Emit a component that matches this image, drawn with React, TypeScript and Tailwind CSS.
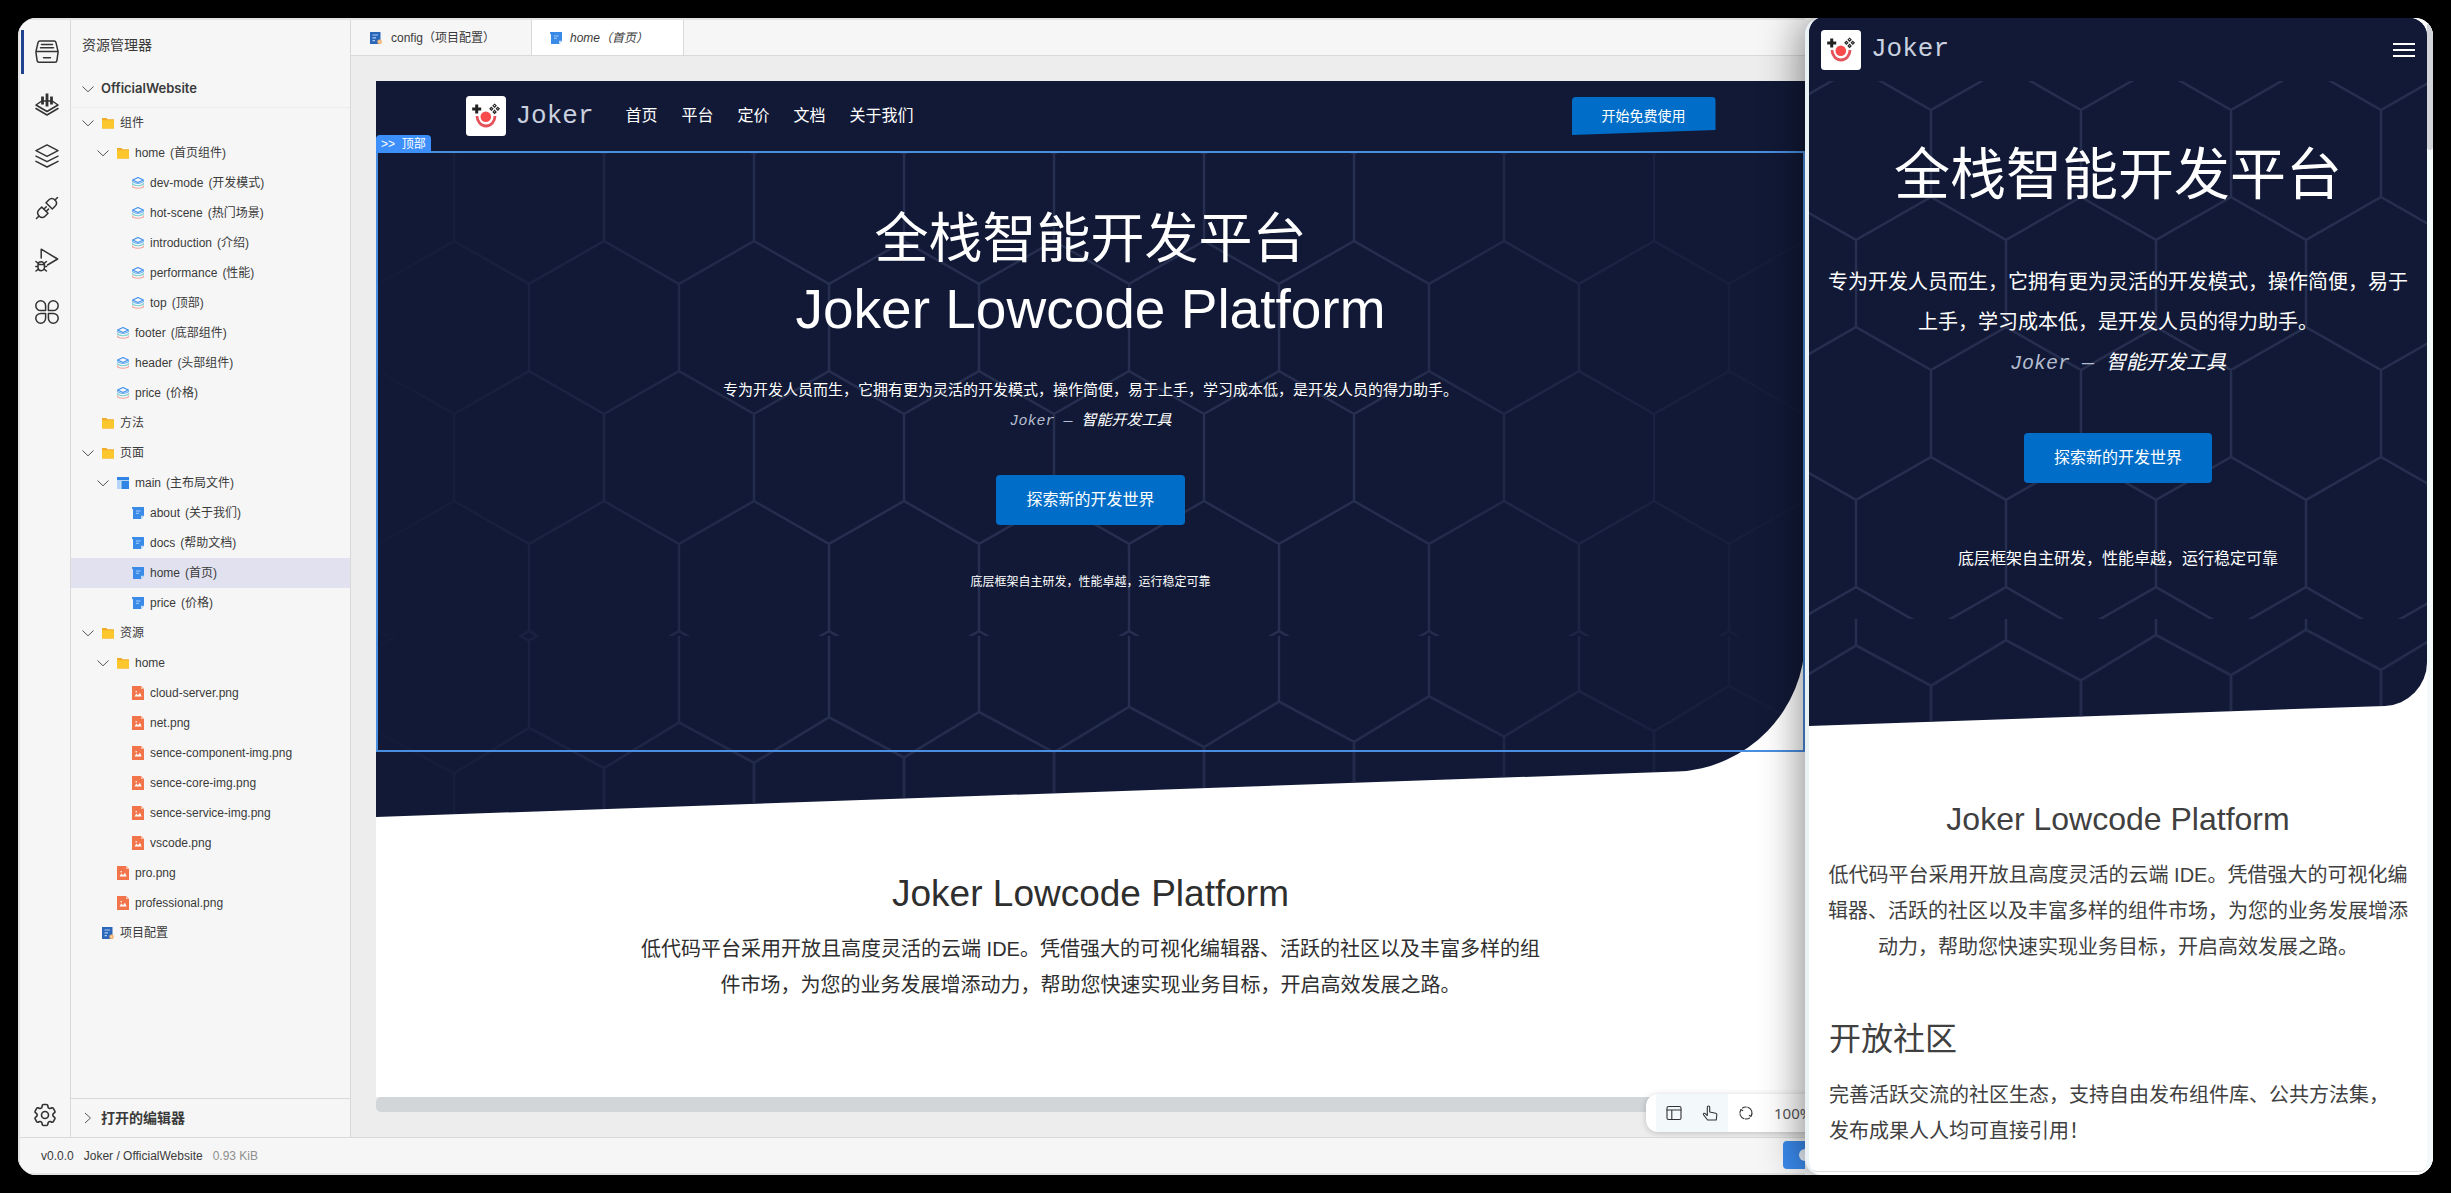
import React from "react";
import { HiOutlineCog6Tooth } from "react-icons/hi2";

/* ---------- drawings ---------- */

const line = { fill: "none", stroke: "currentColor", strokeLinecap: "round", strokeLinejoin: "round" } as const;

function Logo() {
  return (
    <svg viewBox="0 0 40 40" className="size-10 shrink-0" aria-hidden="true">
      <rect width="40" height="40" rx="3.5" fill="#fff" />
      <path d="M10.7 8.4v9M6.2 12.9h9" stroke="#222" strokeWidth="3" fill="none" />
      <g fill="none" stroke="#222" strokeWidth="1.1">
        <path d="m28.6 8.2 1.500 1.500-1.500 1.500-1.500-1.500zM28.6 14.4l1.500 1.500-1.500 1.500-1.500-1.500zM25.4 11.3l1.500 1.500-1.500 1.500-1.500-1.500zM31.8 11.3l1.500 1.500-1.500 1.500-1.500-1.500z" />
      </g>
      <path d="M11 20a9 10 0 0 0 18 0" fill="none" stroke="#e5535a" strokeWidth="2.800" />
      <circle cx="19.800" cy="20.600" r="6.300" fill="#fff" />
      <circle cx="19.800" cy="20.800" r="5.300" fill="#f94b4b" />
    </svg>
  );
}

function DrawerIcon() {
  return (
    <svg viewBox="0 0 24 24" className="size-6" {...line} strokeWidth="1.5">
      <path d="M.9 11.4h22.2M1 11.4l2-8.8Q3.4 1 5 1h14q1.6 0 2 1.6l2 8.8v1.2l-1.1 8Q21.7 22.3 20 22.3H4q-1.7 0-1.9-1.7L1 12.6z" />
      <path d="M6.5 4.500h11M5.500 7.800h13M8.500 17.800h7" />
    </svg>
  );
}

function ChartStackIcon() {
  return (
    <svg viewBox="0 0 24 24" className="size-6" {...line} strokeWidth="1.5">
      <path d="M6 9.5 1 13l11 6.500L23 13l-5-3.500M1 16.500 12 23l11-6.500" />
      <path d="M7.5 4.500v8M12 1.500v13M16.500 4.500v8" strokeWidth="2.800" strokeLinecap="butt" />
      <path d="M7 9h10" />
    </svg>
  );
}

function LayersIcon() {
  return (
    <svg viewBox="0 0 24 24" className="size-6" {...line} strokeWidth="1.5">
      <path d="M12 .9 23 6.600l-11 5.700L1 6.600zM1 12.200l11 5.500 11-5.500M1 17.400l11 5.600 11-5.600" />
    </svg>
  );
}

function PlugIcon() {
  return (
    <svg viewBox="0 0 24 24" className="size-6" {...line} strokeWidth="1.5">
      <path d="M1.5 22.500 4 20M20 4l2.500-2.500" />
      <path d="M4 20c-2-2-1.800-4.500 0-6.300l2.700-2.700 6.300 6.300-2.700 2.700c-1.800 1.800-4.300 2-6.300 0zM20 4c2 2 1.800 4.500 0 6.300L17.300 13 11 6.700 13.700 4c1.800-1.800 4.300-2 6.300 0z" />
      <path d="m9 13 2.300-2.300M11.300 15.300l2.200-2.200" />
    </svg>
  );
}

function DebugIcon() {
  return (
    <svg viewBox="0 0 24 24" className="size-6" {...line} strokeWidth="1.5">
      <path d="M6.2 10V1.200L22.600 11 12.500 17" />
      <path d="M3 17a3.200 3.200 0 0 1 6.400 0v2.500a3.200 3.200 0 0 1-6.400 0zM3 16.500h6.400M1 13.500l2 1.800M11.400 13.500l-2 1.800M.8 18.500H3M9.400 18.500h2.200M1 23l2.200-1.800M11.400 23l-2.200-1.800" />
    </svg>
  );
}

function PetalsIcon() {
  return (
    <svg viewBox="0 0 24 24" className="size-6" {...line} strokeWidth="1.5">
      <path d="M10.6 10.600H5.800A4.900 4.900 0 1 1 10.600 5.800zM13.400 10.600h4.800A4.900 4.900 0 1 0 13.400 5.800zM10.600 13.400H5.800a4.900 4.900 0 1 0 4.800 4.800zM13.400 13.400h4.800a4.900 4.900 0 1 1-4.800 4.800z" />
    </svg>
  );
}

type Kind = "folder" | "comp" | "page" | "layout" | "img" | "config";

function FileIcon({ kind }: { kind: Kind }) {
  const cls = "w-3 h-3.5 shrink-0";
  switch (kind) {
    case "folder":
      return (
        <svg viewBox="0 0 12 14" className={cls}>
          <path d="M0 2h4.5l1 1.200H12V12.400H0z" fill="#f0ac28" />
          <path d="M0 4.200h12V12.400H0z" fill="#fcc62d" />
        </svg>
      );
    case "comp":
      return (
        <svg viewBox="0 0 12 14" className={cls} fill="none" strokeWidth="1.1" strokeLinejoin="round">
          <path d="M.6 9.600v1.300q5.400 2.800 10.800 0V9.600" stroke="#f2a39d" />
          <path d="M.6 6.900v1.400q5.400 3 10.800 0V6.900" stroke="#7fd3cf" />
          <path d="M6 1.600 11.400 4 6 6.600.6 4z" stroke="#3f8fee" />
          <path d="M.6 4v1.800Q6 9 11.400 5.800V4" stroke="#6db1f2" />
        </svg>
      );
    case "page":
      return (
        <svg viewBox="0 0 12 14" className={cls}>
          <path d="M0 1h12v8.800L9 13H1V3.500L0 2.500z" fill="#3a8ae8" />
          <path d="M12 9.800 9 13V9.800z" fill="#c4defa" />
          <path d="M4 5h4.500M4 7.300h3" stroke="#b4d5fa" strokeWidth=".9" />
        </svg>
      );
    case "layout":
      return (
        <svg viewBox="0 0 12 14" className={cls}>
          <path d="M0 1h12v3.300H0z" fill="#2f84e4" />
          <path d="M0 4.300h3.700V13H0z" fill="#b5d5f8" />
          <path d="M4.400 5H12V13H4.400z" fill="#2f84e4" />
        </svg>
      );
    case "img":
      return (
        <svg viewBox="0 0 12 14" className={cls}>
          <path d="M0 0h9l3 3v11H0z" fill="#f2744a" />
          <path d="M9 0v3h3z" fill="#f9bda8" />
          <path d="m2.5 10.500 1.800-3 1.700 1.700 2-2.400 1.600 3.700z" fill="#fff" />
          <circle cx="4.2" cy="5.800" r=".8" fill="#fff" />
        </svg>
      );
    case "config":
      return (
        <svg viewBox="0 0 12 14" className={cls}>
          <path d="M0 1h10.5v12H0z" fill="#2c66b8" />
          <path d="M2.5 4h5.500M2.500 6.800h3.500M2.500 9.600h2.500" stroke="#a8ccf5" strokeWidth="1.2" />
          <circle cx="9.6" cy="10.800" r="2.400" fill="#f5b573" />
          <circle cx="9.6" cy="10.800" r=".8" fill="#fbe3c6" />
        </svg>
      );
  }
}

function Chevron({ right = false }: { right?: boolean }) {
  return (
    <svg viewBox="0 0 12 12" className="size-3 shrink-0" fill="none" stroke="#555" strokeWidth="1">
      <path d={right ? "M3 1l5.500 5L3 11" : "M.5 3.500 6 8.800l5.500-5.300"} />
    </svg>
  );
}

/* Honeycomb lattice that tiles across whatever box it is placed in. */
function Honeycomb({ id, x, y, fade = false }: { id: string; x: number; y: number; fade?: boolean }) {
  return (
    <svg className="absolute inset-0 size-full" aria-hidden="true">
      <defs>
        <pattern id={id} width="150" height="260" patternUnits="userSpaceOnUse" patternTransform={`translate(${x} ${y})`}>
          <path
            d="M75 0v87M75 87 0 130M75 87l75 43M0 130v87M150 130v87M0 217l75 43M150 217l-75 43"
            fill="none"
            stroke="#262f4f"
            strokeWidth="2.4"
          />
        </pattern>
        <linearGradient id={`${id}-g`}>
          <stop offset="0" stopColor="#fff" stopOpacity=".1" />
          <stop offset=".3" stopColor="#fff" />
          <stop offset=".7" stopColor="#fff" />
          <stop offset="1" stopColor="#fff" stopOpacity=".1" />
        </linearGradient>
        <mask id={`${id}-m`}>
          <rect width="100%" height="100%" fill={`url(#${id}-g)`} />
        </mask>
      </defs>
      <rect width="100%" height="100%" fill={`url(#${id})`} mask={fade ? `url(#${id}-m)` : undefined} />
    </svg>
  );
}

/* ---------- explorer ---------- */

type Row = { level: number; kind: Kind; name: string; note?: string; open?: boolean; active?: boolean };

const rows: Row[] = [
  { level: 0, kind: "folder", name: "组件", open: true },
  { level: 1, kind: "folder", name: "home", note: "(首页组件)", open: true },
  { level: 2, kind: "comp", name: "dev-mode", note: "(开发模式)" },
  { level: 2, kind: "comp", name: "hot-scene", note: "(热门场景)" },
  { level: 2, kind: "comp", name: "introduction", note: "(介绍)" },
  { level: 2, kind: "comp", name: "performance", note: "(性能)" },
  { level: 2, kind: "comp", name: "top", note: "(顶部)" },
  { level: 1, kind: "comp", name: "footer", note: "(底部组件)" },
  { level: 1, kind: "comp", name: "header", note: "(头部组件)" },
  { level: 1, kind: "comp", name: "price", note: "(价格)" },
  { level: 0, kind: "folder", name: "方法" },
  { level: 0, kind: "folder", name: "页面", open: true },
  { level: 1, kind: "layout", name: "main", note: "(主布局文件)", open: true },
  { level: 2, kind: "page", name: "about", note: "(关于我们)" },
  { level: 2, kind: "page", name: "docs", note: "(帮助文档)" },
  { level: 2, kind: "page", name: "home", note: "(首页)", active: true },
  { level: 2, kind: "page", name: "price", note: "(价格)" },
  { level: 0, kind: "folder", name: "资源", open: true },
  { level: 1, kind: "folder", name: "home", open: true },
  { level: 2, kind: "img", name: "cloud-server.png" },
  { level: 2, kind: "img", name: "net.png" },
  { level: 2, kind: "img", name: "sence-component-img.png" },
  { level: 2, kind: "img", name: "sence-core-img.png" },
  { level: 2, kind: "img", name: "sence-service-img.png" },
  { level: 2, kind: "img", name: "vscode.png" },
  { level: 1, kind: "img", name: "pro.png" },
  { level: 1, kind: "img", name: "professional.png" },
  { level: 0, kind: "config", name: "项目配置" },
];

const indent = ["pl-[11px]", "pl-[26px]", "pl-[41px]"];

function TreeRow({ row }: { row: Row }) {
  return (
    <li>
      <button
        type="button"
        className={`flex h-[30px] w-full items-center text-left text-xs text-[#3a3a3a] ${indent[row.level]} ${row.active ? "bg-[#e1e1ef]" : ""}`}
      >
        {row.open ? <Chevron /> : <span className="w-3 shrink-0" />}
        <span className="ml-2 flex">
          <FileIcon kind={row.kind} />
        </span>
        <span className="ml-1.5">{row.name}</span>
        {row.note && <span className="ml-[5px]">{row.note}</span>}
      </button>
    </li>
  );
}

function Rail() {
  const items: [string, React.ReactNode][] = [
    ["资源管理器", <DrawerIcon />],
    ["数据模型", <ChartStackIcon />],
    ["图层", <LayersIcon />],
    ["连接", <PlugIcon />],
    ["运行和调试", <DebugIcon />],
    ["扩展", <PetalsIcon />],
  ];
  return (
    <nav className="flex w-[51px] shrink-0 flex-col border-r border-[#d9d9d9] pt-1.5 text-[#333]">
      {items.map(([label, icon], i) => (
        <button
          key={label}
          type="button"
          aria-label={label}
          className="relative flex h-[52px] w-full items-center justify-center pl-1"
        >
          {i === 0 && <span className="absolute top-1 left-px h-11 w-[3px] bg-[#1f4390]" />}
          {icon}
        </button>
      ))}
      <button type="button" aria-label="设置" className="mt-auto mb-2 flex h-7 items-center justify-center">
        <HiOutlineCog6Tooth className="size-7" strokeWidth={1.4} />
      </button>
    </nav>
  );
}

function Explorer() {
  return (
    <aside className="flex w-[280px] shrink-0 flex-col border-r border-[#d9d9d9] text-[#3a3a3a]">
      <h2 className="pt-[15px] pl-[11px] text-sm/5">资源管理器</h2>
      <button
        type="button"
        className="mt-4 flex h-[37px] w-full items-center gap-[7px] border-b border-[#ececec] pl-[11px] text-left text-[13px] font-semibold"
      >
        <Chevron />
        <span className="font-['Inter']">OfficialWebsite</span>
      </button>
      <ul>
        {rows.map((r, i) => (
          <TreeRow key={i} row={r} />
        ))}
      </ul>
      <button
        type="button"
        className="mt-auto flex h-[39px] w-full items-center gap-[7px] border-t border-[#d9d9d9] pl-[11px] text-left text-sm font-bold"
      >
        <Chevron right />
        打开的编辑器
      </button>
    </aside>
  );
}

/* ---------- design canvas ---------- */

function Tabs() {
  return (
    <div role="tablist" className="flex h-9 shrink-0 border-b border-[#d9d9d9] text-xs text-[#3a3a3a]">
      <button role="tab" type="button" className="flex w-[181px] items-center gap-[9px] border-r border-[#d9d9d9] pl-[19px]">
        <FileIcon kind="config" />
        config（项目配置）
      </button>
      <button
        role="tab"
        type="button"
        aria-selected="true"
        className="flex w-[152px] items-center gap-2 border-r border-[#d9d9d9] bg-white pl-[18px] italic"
      >
        <FileIcon kind="page" />
        home（首页）
      </button>
    </div>
  );
}

function Brand() {
  return (
    <a href="#" className="flex items-center gap-2.5">
      <Logo />
      <span className="font-['Liberation_Mono',monospace] text-[26px] text-[#c9d0df]">Joker</span>
    </a>
  );
}

function Tagline() {
  return (
    <em className="block">
      <span className="font-['Liberation_Mono',monospace] text-[#b5bdd0]">Joker — </span>
      智能开发工具
    </em>
  );
}

function ExploreButton() {
  return (
    <button type="button" className="mx-auto block h-[50px] rounded bg-[#006ec8] px-[30px] text-base">
      探索新的开发世界
    </button>
  );
}

function DesktopPage() {
  return (
    <div className="relative min-h-0 flex-1 overflow-hidden bg-white">
      <div className="relative pb-[65px] text-white">
        <div className="absolute inset-0 origin-bottom-left -skew-y-2 overflow-hidden rounded-br-[128px] bg-[#111936]">
          <Honeycomb id="hexA" x={3} y={175} fade />
        </div>
        <header className="relative h-[71px] bg-[#111936]">
          <div className="mx-auto flex h-full w-full max-w-[1250px] items-center pb-px">
            <Brand />
            <nav className="ml-8 flex gap-6 text-base">
              {["首页", "平台", "定价", "文档", "关于我们"].map((t) => (
                <a key={t} href="#">{t}</a>
              ))}
            </nav>
            <button
              type="button"
              className="ml-auto h-[38px] w-36 rounded-t bg-[#006ec8] text-sm [clip-path:polygon(0_0,100%_0,100%_87%,0_100%)]"
            >
              开始免费使用
            </button>
          </div>
        </header>
        <section className="relative min-h-[600px] text-center">
          <div className="absolute inset-x-0 top-0 h-[484px] bg-[#111936]">
            <Honeycomb id="hexB" x={3} y={2} fade />
          </div>
          <div className="relative pt-[52px]">
            <h1 className="leading-[70px]">
              <span className="block text-[54px]">全栈智能开发平台</span>
              <span className="block text-[55px]">Joker Lowcode Platform</span>
            </h1>
            <div className="mt-[31px] mb-[38px] text-[15px]/[30px]">
              <p>专为开发人员而生，它拥有更为灵活的开发模式，操作简便，易于上手，学习成本低，是开发人员的得力助手。</p>
              <Tagline />
            </div>
            <ExploreButton />
            <p className="mt-[47px] text-xs/5">底层框架自主研发，性能卓越，运行稳定可靠</p>
          </div>
          <div className="pointer-events-none absolute inset-x-0 -top-px bottom-0 border-2 border-[#4a8ee0]">
            <span className="absolute bottom-full -left-0.5 flex h-[18px] items-center rounded-t bg-[#3d90fb] px-[5px] text-xs">
              &gt;&gt;&nbsp; 顶部
            </span>
          </div>
        </section>
      </div>
      <section className="pt-[52px] text-center text-[#2e2e2e]">
        <h2 className="text-[37px]/[50px]">Joker Lowcode Platform</h2>
        <p className="mx-auto mt-3 max-w-[910px] text-xl/9">
          低代码平台采用开放且高度灵活的云端 IDE。凭借强大的可视化编辑器、活跃的社区以及丰富多样的组件市场，为您的业务发展增添动力，帮助您快速实现业务目标，开启高效发展之路。
        </p>
      </section>
    </div>
  );
}

function ZoomBar() {
  return (
    <div className="absolute right-[-60px] bottom-[5px] flex h-[38px] w-[219px] items-center rounded-xl bg-white px-2.5 text-[#333] shadow-[0_1px_6px_rgba(0,0,0,0.2)]">
      <button type="button" aria-label="布局" className="flex h-full w-9 items-center justify-center bg-[#f3f9fa]">
        <svg viewBox="0 0 16 16" className="size-4" {...line} strokeWidth="1.1">
          <rect x="1" y="1.5" width="14" height="13" rx="1.5" />
          <path d="M1 5h14M5.800 5v9.500" />
        </svg>
      </button>
      <button type="button" aria-label="拖动" className="flex h-full w-9 items-center justify-center bg-[#f3f9fa]">
        <svg viewBox="0 0 16 16" className="size-4" {...line} strokeWidth="1.1">
          <path d="M5.600 15 1.600 9.800q-.6-1.100.4-1.500.8-.3 1.600.6L5.300 10.500V2.300Q5.300 1 6.500 1t1.200 1.300V7l6 1.300q1.200.3 1.100 1.500l-.5 5.200z" />
        </svg>
      </button>
      <button type="button" aria-label="重置" className="flex h-full w-9 items-center justify-center">
        <svg viewBox="0 0 16 16" className="size-4" {...line} strokeWidth="1.1">
          <path d="M9.800 2.200a6 6 0 0 1 3.300 8.900M11.500 13a6 6 0 0 1-4 .9M6 13.700a6 6 0 0 1-3.200-8.800M4.500 3A6 6 0 0 1 8.300 2M13.800 9.200l-.7 2.200-1.800-1M2.200 6.800l.6-2.200 1.900 1" />
        </svg>
      </button>
      <span className="ml-2.5 font-['Noto_Sans'] text-[15px] text-[#555]">100%</span>
    </div>
  );
}

function Editor() {
  return (
    <main className="flex min-w-0 flex-1 flex-col">
      <Tabs />
      <div className="relative flex min-h-0 flex-1 flex-col bg-[#ededed] py-[25px] pl-[25px]">
        <DesktopPage />
        <div className="h-[15px] shrink-0 rounded-l-[5px] bg-[#d2d6d9]" />
        <ZoomBar />
      </div>
    </main>
  );
}

function StatusBar() {
  return (
    <footer className="relative flex h-9 shrink-0 items-center gap-2.5 overflow-hidden border-t border-[#d9d9d9] pl-[21px] text-xs text-[#3a3a3a]">
      <span>v0.0.0</span>
      <span>Joker / OfficialWebsite</span>
      <span className="text-[#8f8f8f]">0.93 KiB</span>
      <button
        type="button"
        aria-label="预览"
        className="absolute top-[3px] -right-20 flex h-7 w-[102px] items-center rounded bg-[#3a8bee] pl-4"
      >
        <span className="size-3 rounded-full bg-white/90" />
      </button>
    </footer>
  );
}

/* ---------- phone preview ---------- */

function PhonePreview() {
  return (
    <aside className="relative z-10 flex w-[628px] shrink-0 overflow-hidden rounded-2xl border-l-4 border-[#eaf2f6] bg-white shadow-[-4px_0_40px_rgba(0,0,0,0.45)]">
      <div className="mb-[3px] min-w-0 flex-1 overflow-hidden rounded-l-lg rounded-tr-[18px] rounded-br-lg border-b border-[#dcdcdc]">
        <div className="relative pb-[155px] text-white">
          <div className="absolute inset-0 origin-bottom-left -skew-y-2 overflow-hidden rounded-br-[42px] bg-[#111936]">
            <Honeycomb id="hexC" x={47} y={152} />
          </div>
          <header className="relative flex h-[63px] items-center justify-between bg-[#111936] px-3">
            <Brand />
            <button type="button" aria-label="菜单" className="flex w-[22px] flex-col gap-1">
              <span className="h-0.5 bg-white" />
              <span className="h-0.5 bg-white" />
              <span className="h-0.5 bg-white" />
            </button>
          </header>
          <section className="relative px-[18px] text-center">
            <div className="absolute inset-x-0 top-0 h-[538px] bg-[#111936]">
              <Honeycomb id="hexD" x={47} y={29} />
            </div>
            <div className="relative pt-[54px]">
              <h1 className="text-[56px]/[80px]">全栈智能开发平台</h1>
              <div className="mt-[47px] mb-[49px] text-xl/10">
                <p>专为开发人员而生，它拥有更为灵活的开发模式，操作简便，易于上手，学习成本低，是开发人员的得力助手。</p>
                <Tagline />
              </div>
              <ExploreButton />
              <p className="mt-16 text-base/6">底层框架自主研发，性能卓越，运行稳定可靠</p>
            </div>
          </section>
        </div>
        <div className="px-[18px] pt-[71px] text-[#404040]">
          <section className="text-center">
            <h2 className="text-[32px]/[44px]">Joker Lowcode Platform</h2>
            <p className="mt-4 text-xl/9">
              低代码平台采用开放且高度灵活的云端 IDE。凭借强大的可视化编辑器、活跃的社区以及丰富多样的组件市场，为您的业务发展增添动力，帮助您快速实现业务目标，开启高效发展之路。
            </p>
          </section>
          <section className="mt-[52px] pl-0.5">
            <h2 className="text-[32px]/[44px]">开放社区</h2>
            <p className="mt-4 text-xl/9">
              完善活跃交流的社区生态，支持自由发布组件库、公共方法集，
              <br />
              发布成果人人均可直接引用！
            </p>
          </section>
        </div>
      </div>
      <div className="w-1.5 shrink-0 bg-[#f4fafc] pt-1.5">
        <div className="h-[126px] rounded-b bg-[#d2d6da]" />
      </div>
    </aside>
  );
}

export default function App() {
  return (
    <div
      lang="zh-CN"
      className="h-screen bg-black p-[18px] font-['Liberation_Sans','Noto_Sans_CJK_SC',sans-serif]"
    >
      <div className="flex h-full overflow-hidden rounded-[18px] bg-[#f6f6f6]">
        <div className="flex min-w-0 flex-1 flex-col overflow-hidden border-y-2 border-l-2 border-[#e4e4e4]">
          <div className="flex min-h-0 flex-1">
            <Rail />
            <Explorer />
            <Editor />
          </div>
          <StatusBar />
        </div>
        <PhonePreview />
      </div>
    </div>
  );
}
